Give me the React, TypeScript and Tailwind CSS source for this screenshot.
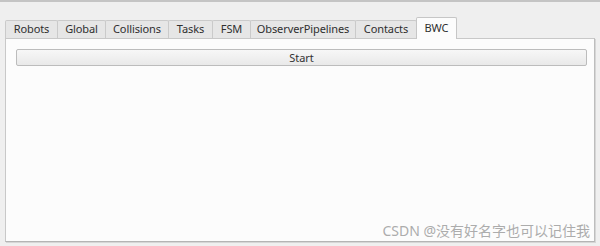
import { useState } from 'react';

const tabs = [
    { name: 'Robots', w: 'w-[53px]' },
    { name: 'Global', w: 'w-[49px]' },
    { name: 'Collisions', w: 'w-[64px]' },
    { name: 'Tasks', w: 'w-[45px]' },
    { name: 'FSM', w: 'w-[39px]' },
    { name: 'ObserverPipelines', w: 'w-[106px]' },
    { name: 'Contacts', w: 'w-[62px]' },
    { name: 'BWC', w: 'w-[41px]' },
];

export default function App() {
    const [active, setActive] = useState('BWC');

    return (
        <div
            className="w-[600px] h-[246px] bg-[#efefef] flex flex-col overflow-hidden text-[#2f2f2f]"
            style={{ fontFamily: '"Noto Sans", "Noto Sans CJK SC", sans-serif' }}
        >
            {/* window title strip, cut off */}
            <div className="h-[2px] bg-[#c4c4c4]" />

            <div className="flex-1 flex flex-col px-[5px] pb-[4px] pt-[15px]">
                {/* Tab bar */}
                <div className="flex items-end h-[21px] relative z-10">
                    {tabs.map((t, i) => {
                        const sel = t.name === active;
                        return (
                            <button
                                key={t.name}
                                onClick={() => setActive(t.name)}
                                className={`${t.w} ${i > 0 ? '-ml-px' : ''} flex items-center justify-center text-[11px] tracking-[-0.1px] border border-b-0 rounded-t-[2px] ${sel ? 'bg-[#fcfcfc] border-[#c6c6c6] relative z-10 pb-[1px] -mb-px h-[22px]' : 'h-[18px] bg-[#e6e6e6] border-[#cacaca]'}`}
                            >
                                {t.name}
                            </button>
                        );
                    })}
                </div>

                {/* Panel */}
                <div className="flex-1 bg-[#fcfcfc] border border-[#c8c8c8] border-r-[#bdbdbd] border-b-[#b4b4b4] shadow-[1px_1px_0_#d6d6d6] relative pl-[10px] pr-[7px] pt-[10px]">
                    <button className="w-full h-[17px] rounded-[2px] border border-[#bcbcbc] bg-gradient-to-b from-[#f7f7f7] to-[#e9e9e9] text-[11px] text-[#333] flex items-center justify-center leading-none">
                        Start
                    </button>

                    <div className="absolute right-[4px] bottom-[1px] text-[14px] text-[#acacac] leading-[18px] whitespace-nowrap">
                        CSDN @没有好名字也可以记住我
                    </div>
                </div>
            </div>
        </div>
    );
}
